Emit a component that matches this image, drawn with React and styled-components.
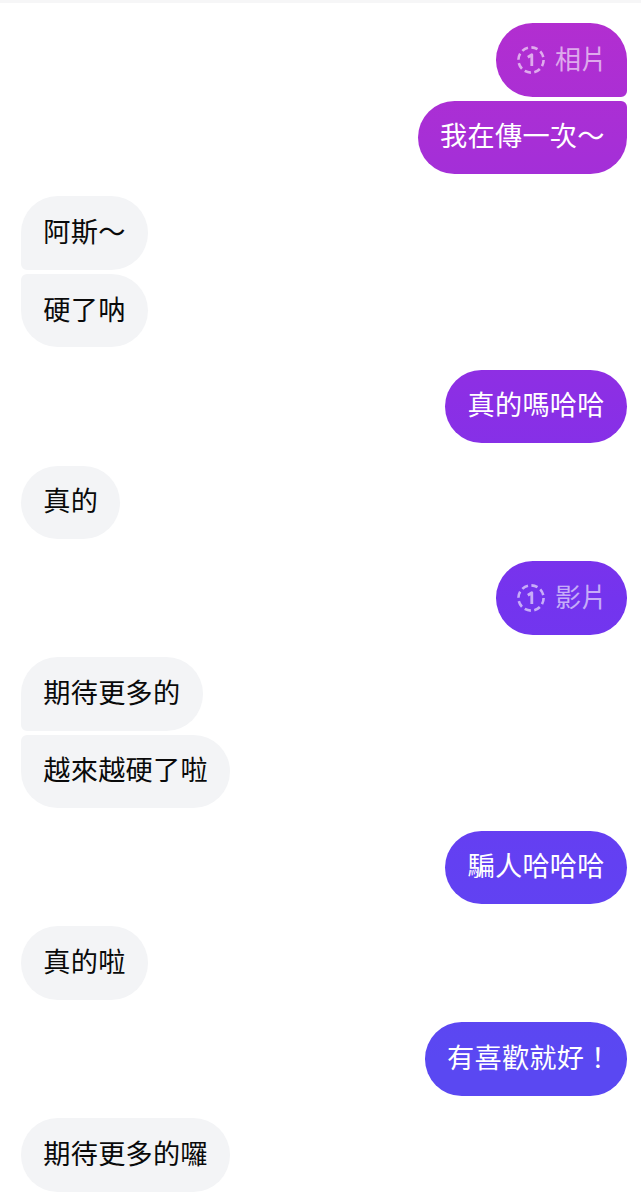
import React from "react";
import styled, { createGlobalStyle } from "styled-components";

const Global = createGlobalStyle`
  html, body { margin: 0; padding: 0; background: #fff; }
  body { font-family: "Noto Sans CJK TC", "Noto Sans CJK SC", sans-serif; }
`;

const Thread = styled.main`
  width: 641px;
  height: 1200px;
  overflow: hidden;
  box-sizing: border-box;
  border-top: 3px solid #f6f6f7;
  padding: 20.2px 14px 0 21px;
  display: flex;
  flex-direction: column;
  gap: 22.35px;
`;

const Group = styled.section`
  display: flex;
  flex-direction: column;
  gap: 3.95px;
  align-items: ${(p) => (p.$mine ? "flex-end" : "flex-start")};
`;

const radius = (p) => {
  const big = "36.75px";
  const small = "6px";
  const top = p.$joinTop ? small : big;
  const bottom = p.$joinBottom ? small : big;
  return p.$mine
    ? `${big} ${top} ${bottom} ${big}`
    : `${top} ${big} ${big} ${bottom}`;
};

const Bubble = styled.div`
  height: 73.5px;
  box-sizing: border-box;
  padding: ${(p) => (p.$attachment ? "0 20px 0 21px" : "0 22.3px 5px")};
  display: flex;
  align-items: center;
  font-size: 27.2px;
  letter-spacing: 0.25px;
  line-height: 1;
  white-space: nowrap;
  border-radius: ${radius};
  color: ${(p) => (p.$mine ? "#fff" : "#0a0a0a")};
  background: ${(p) =>
    p.$mine
      ? "linear-gradient(180deg, #b42ecf 0px, #a72fd6 140px, #8b2fe5 400px, #7434ee 600px, #6340f2 860px, #5a48f2 1060px, #5a48f2 1200px) fixed"
      : "#f3f4f6"};
`;

const Attachment = styled.span`
  display: flex;
  align-items: center;
  gap: 10px;
  font-size: 26px;
  letter-spacing: 0;
  color: rgba(255, 255, 255, 0.6);
`;

const AttachmentLabel = styled.span`
  position: relative;
  top: -2px;
`;

const CountIcon = styled.svg`
  width: 28px;
  height: 28px;
  flex: none;
`;

/* Full-width punctuation sits tight against the bubble's end */
const Closing = styled.span`
  margin-right: -7px;
`;

const PendingCount = () => (
  <CountIcon viewBox="0 0 28 28" fill="none" stroke="currentColor" aria-hidden="true">
    <circle cx="14" cy="14" r="12.6" strokeWidth="2.6" strokeDasharray="6.4 3.5" />
    <path d="M10.8 11.2 14.8 8.8V20" strokeWidth="2.8" strokeLinejoin="round" />
  </CountIcon>
);

const thread = [
  { mine: true, items: [{ attachment: "相片" }, { text: "我在傳一次～" }] },
  { items: [{ text: "阿斯～" }, { text: "硬了呐" }] },
  { mine: true, items: [{ text: "真的嗎哈哈" }] },
  { items: [{ text: "真的" }] },
  { mine: true, items: [{ attachment: "影片" }] },
  { items: [{ text: "期待更多的" }, { text: "越來越硬了啦" }] },
  { mine: true, items: [{ text: "騙人哈哈哈" }] },
  { items: [{ text: "真的啦" }] },
  { mine: true, items: [{ text: "有喜歡就好", closing: "！" }] },
  { items: [{ text: "期待更多的囉" }] },
];

export default function App() {
  return (
    <>
      <Global />
      <Thread>
        {thread.map((group, g) => (
          <Group key={g} $mine={group.mine}>
            {group.items.map((item, i) => (
              <Bubble
                key={i}
                $mine={group.mine}
                $attachment={Boolean(item.attachment)}
                $joinTop={i > 0}
                $joinBottom={i < group.items.length - 1}
              >
                {item.attachment ? (
                  <Attachment>
                    <PendingCount />
                    <AttachmentLabel>{item.attachment}</AttachmentLabel>
                  </Attachment>
                ) : (
                  <span>
                    {item.text}
                    {item.closing && <Closing>{item.closing}</Closing>}
                  </span>
                )}
              </Bubble>
            ))}
          </Group>
        ))}
      </Thread>
    </>
  );
}
